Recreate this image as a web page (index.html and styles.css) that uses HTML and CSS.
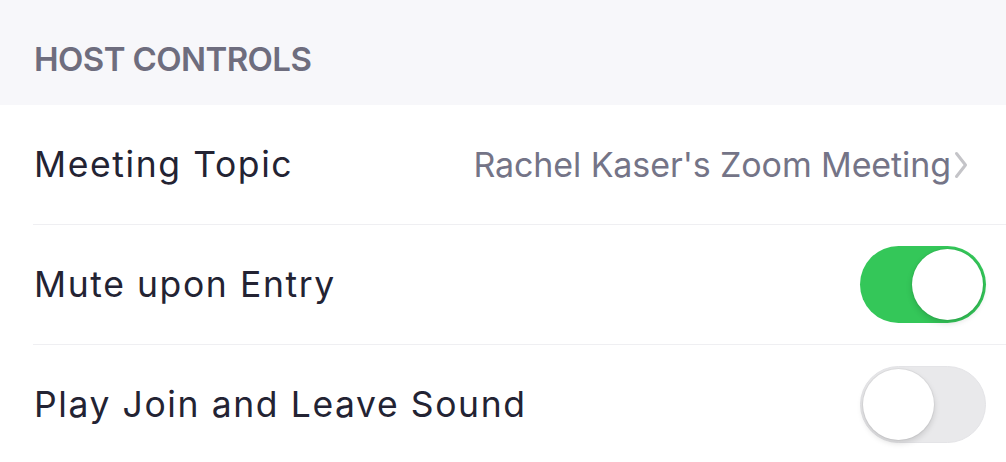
FILE: index.html
```html
<!DOCTYPE html>
<html>
<head>
<meta charset="utf-8">
<link rel="stylesheet" href="styles.css">
</head>
<body>
  <div class="section-header">HOST CONTROLS</div>
  <div class="list">
    <div class="row">
      <span class="label">Meeting Topic</span>
      <span class="value">Rachel Kaser's Zoom Meeting<svg class="chevron" width="14" height="28" viewBox="0 0 14 28"><path d="M2.5 2.5 L11.5 14 L2.5 25.5" fill="none" stroke="#c4c4c8" stroke-width="3" stroke-linecap="round" stroke-linejoin="round"/></svg></span>
    </div>
    <div class="row">
      <span class="label">Mute upon Entry</span>
      <span class="toggle on"><span class="knob"></span></span>
    </div>
    <div class="row">
      <span class="label">Play Join and Leave Sound</span>
      <span class="toggle off"><span class="knob"></span></span>
    </div>
  </div>
</body>
</html>
```
FILE: styles.css
```css
html, body {
  margin: 0;
  padding: 0;
  background: #ffffff;
  font-family: Inter, "Noto Sans", "Liberation Sans", sans-serif;
}

.section-header {
  height: 105px;
  box-sizing: border-box;
  background: #f7f7fa;
  color: #6e6d7e;
  font-size: 33px;
  font-weight: 600;
  letter-spacing: -0.6px;
  padding: 39px 0 0 34px;
  line-height: 40px;
}

.list {
  background: #ffffff;
}

.row {
  margin-left: 33px;
  padding-right: 20px;
  height: 119px;
  border-bottom: 1px solid #efeff2;
  display: flex;
  align-items: center;
  justify-content: space-between;
}

.label {
  font-size: 35.5px;
  letter-spacing: 1.6px;
  color: #232333;
  padding-left: 1px;
}

.value {
  display: flex;
  align-items: center;
  font-size: 34px;
  letter-spacing: -0.1px;
  color: #747487;
  padding-right: 18px;
}

.chevron {
  margin-left: 3px;
}

.toggle {
  position: relative;
  width: 126px;
  height: 77px;
  border-radius: 39px;
  box-sizing: border-box;
  display: flex;
  align-items: center;
  padding: 0 3px;
}

.toggle.on {
  background: #34c759;
  justify-content: flex-end;
}

.toggle.off {
  background: #e9e9eb;
  border: 1px solid #e4e4e7;
  padding: 0 2px;
  justify-content: flex-start;
}

.knob {
  width: 71px;
  height: 71px;
  border-radius: 50%;
  background: #ffffff;
  box-shadow: 0 3px 6px rgba(0, 0, 0, 0.15), 0 0 0 1px rgba(0, 0, 0, 0.04);
}
```
